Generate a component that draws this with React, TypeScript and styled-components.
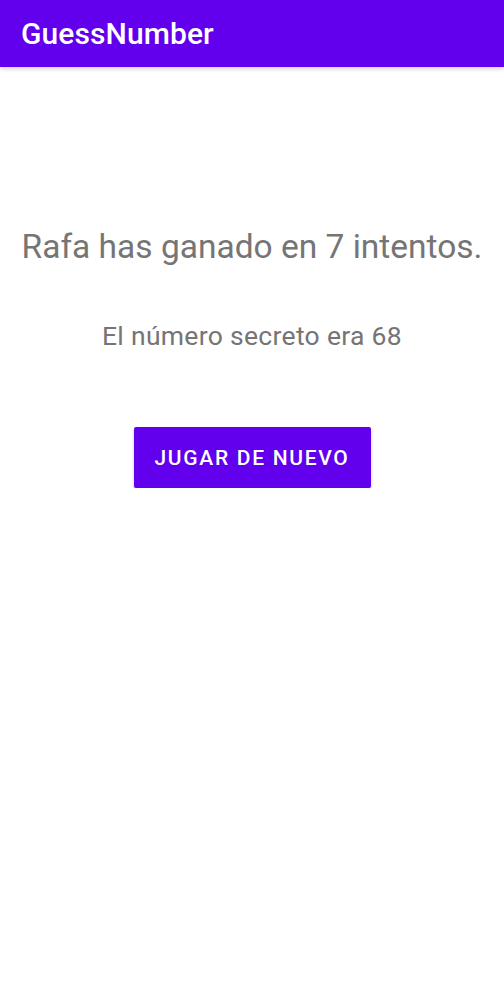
import React from "react";
import styled, { createGlobalStyle } from "styled-components";

const GlobalStyle = createGlobalStyle`
  html, body {
    margin: 0;
    padding: 0;
    background: #fff;
    font-family: Roboto, "Noto Sans", sans-serif;
  }
`;

const AppBar = styled.header`
  height: 67px;
  background: #6200ee;
  display: flex;
  align-items: center;
  padding-left: 21px;
  box-shadow: 0 2px 4px rgba(0, 0, 0, 0.18);
  position: relative;
  z-index: 1;
`;

const AppTitle = styled.h1`
  margin: 0;
  color: #fff;
  font-size: 30px;
  font-weight: 500;
  letter-spacing: 0.1px;
`;

const Content = styled.main`
  display: flex;
  flex-direction: column;
  align-items: center;
  padding-top: 160px;
`;

const Headline = styled.p`
  margin: 0;
  color: #757575;
  font-size: 33.5px;
  text-align: center;
`;

const Secret = styled.p`
  margin: 54px 0 0;
  color: #757575;
  font-size: 26.5px;
  letter-spacing: 0.3px;
  text-align: center;
`;

const Button = styled.button`
  margin-top: 76px;
  width: 237px;
  height: 61px;
  border: none;
  border-radius: 2px;
  background: #6200ee;
  color: #fff;
  font-family: Roboto, "Noto Sans", sans-serif;
  font-size: 21px;
  font-weight: 500;
  letter-spacing: 1.7px;
  box-shadow: 0 2px 3px rgba(0, 0, 0, 0.25);
  cursor: pointer;
`;

export default function App() {
  return (
    <>
      <GlobalStyle />
      <AppBar>
        <AppTitle>GuessNumber</AppTitle>
      </AppBar>
      <Content>
        <Headline>Rafa has ganado en 7 intentos.</Headline>
        <Secret>El número secreto era 68</Secret>
        <Button>JUGAR DE NUEVO</Button>
      </Content>
    </>
  );
}
